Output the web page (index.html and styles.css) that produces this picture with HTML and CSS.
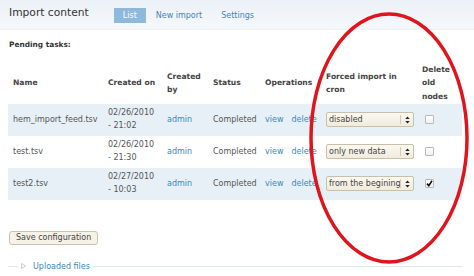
FILE: index.html
```html
<!DOCTYPE html>
<html lang="en">
<head>
    <meta charset="UTF-8">
    <title>Import content</title>
    <link rel="stylesheet" href="styles.css">
</head>
<body>
    <div class="header">
        <h1>Import content</h1>
        <ul class="tabs">
            <li class="active"><a href="#">List</a></li>
            <li><a href="#">New import</a></li>
            <li><a href="#">Settings</a></li>
        </ul>
    </div>

    <div class="content">
        <h3>Pending tasks:</h3>
        <table class="tasks">
            <colgroup>
                <col style="width: 95px">
                <col style="width: 59px">
                <col style="width: 46px">
                <col style="width: 52px">
                <col style="width: 61px">
                <col style="width: 96px">
                <col style="width: 45px">
            </colgroup>
            <thead>
                <tr>
                    <th>Name</th>
                    <th>Created on</th>
                    <th>Created by</th>
                    <th>Status</th>
                    <th>Operations</th>
                    <th>Forced import in cron</th>
                    <th>Delete old nodes</th>
                </tr>
            </thead>
            <tbody>
                <tr class="odd">
                    <td>hem_import_feed.tsv</td>
                    <td>02/26/2010<br>- 21:02</td>
                    <td><a href="#">admin</a></td>
                    <td>Completed</td>
                    <td><a href="#">view</a><a class="op" href="#">delete</a></td>
                    <td>
                        <div class="select"><span class="value">disabled</span><span class="arrows"><svg width="5" height="8" viewBox="0 0 5 8"><path d="M2.5 0.5 L4.7 3 L0.3 3 Z M2.5 7.5 L4.7 5 L0.3 5 Z" fill="#222"/></svg></span></div>
                    </td>
                    <td><span class="checkbox"></span></td>
                </tr>
                <tr class="even">
                    <td>test.tsv</td>
                    <td>02/26/2010<br>- 21:30</td>
                    <td><a href="#">admin</a></td>
                    <td>Completed</td>
                    <td><a href="#">view</a><a class="op" href="#">delete</a></td>
                    <td>
                        <div class="select"><span class="value">only new data</span><span class="arrows"><svg width="5" height="8" viewBox="0 0 5 8"><path d="M2.5 0.5 L4.7 3 L0.3 3 Z M2.5 7.5 L4.7 5 L0.3 5 Z" fill="#222"/></svg></span></div>
                    </td>
                    <td><span class="checkbox"></span></td>
                </tr>
                <tr class="odd">
                    <td>test2.tsv</td>
                    <td>02/27/2010<br>- 10:03</td>
                    <td><a href="#">admin</a></td>
                    <td>Completed</td>
                    <td><a href="#">view</a><a class="op" href="#">delete</a></td>
                    <td>
                        <div class="select"><span class="value">from the begining</span><span class="arrows"><svg width="5" height="8" viewBox="0 0 5 8"><path d="M2.5 0.5 L4.7 3 L0.3 3 Z M2.5 7.5 L4.7 5 L0.3 5 Z" fill="#222"/></svg></span></div>
                    </td>
                    <td><span class="checkbox checked"><svg width="7" height="7" viewBox="0 0 7 7"><path d="M1 3.6 L2.8 5.6 L6 0.8" fill="none" stroke="#111" stroke-width="1.6"/></svg></span></td>
                </tr>
            </tbody>
        </table>

        <button class="btn-save">Save configuration</button>

        <fieldset class="collapsed">
            <legend><svg class="arrow" width="5" height="6" viewBox="0 0 5 6"><path d="M0.5 0.5 L4.5 3 L0.5 5.5 Z" fill="none" stroke="#c4c9ce" stroke-width="0.9"/></svg><a href="#">Uploaded files</a></legend>
        </fieldset>
    </div>

    <svg class="annotation" width="474" height="276" viewBox="0 0 474 276">
        <ellipse cx="389" cy="138" rx="78" ry="124" fill="none" stroke="#e0141c" stroke-width="3.5"/>
    </svg>
</body>
</html>
```

FILE: styles.css
```css
body {
    margin: 0;
    padding: 0;
    font-family: "DejaVu Sans", sans-serif;
    font-size: 8px;
    color: #555;
    background: #fff;
    position: relative;
    overflow: hidden;
}
a {
    color: #3a87b8;
    text-decoration: none;
}
.header {
    height: 30px;
    padding: 5px 9px 0;
    box-sizing: border-box;
    display: flex;
    align-items: flex-start;
    background: linear-gradient(#ecf1f7, #f5f8fb);
    border-bottom: 1px solid #edf1f5;
}
h1 {
    margin: 0;
    font-size: 10.7px;
    line-height: 16px;
    font-weight: normal;
    color: #333;
}
.tabs {
    list-style: none;
    margin: 3px 0 0 25px;
    padding: 0;
    display: flex;
    gap: 1px;
}
.tabs li a {
    display: block;
    padding: 0 9px;
    line-height: 15px;
    color: #4584b3;
}
.tabs li.active a {
    background: #8fb9da;
    color: #fff;
}
.content {
    padding: 0 8px;
}
h3 {
    margin: 9px 0 11px 1px;
    font-size: 7.4px;
    line-height: 12px;
    color: #333;
}
.tasks {
    width: 454px;
    table-layout: fixed;
    border-collapse: collapse;
}
.tasks th {
    padding: 1px 5px;
    font-size: 7.6px;
    line-height: 13.3px;
    text-align: left;
    font-weight: bold;
    color: #444;
}
.tasks td {
    padding: 3.5px 5px;
    line-height: 12.5px;
    white-space: nowrap;
    vertical-align: middle;
}
.tasks tr.odd {
    background: #e8f0f7;
}
.tasks .op {
    margin-left: 8px;
}
.select {
    width: 88px;
    height: 15px;
    box-sizing: border-box;
    display: flex;
    align-items: center;
    border: 1px solid #c9c0a9;
    border-radius: 2px;
    background: linear-gradient(#fbf9f2, #f1ebdb);
    color: #444;
}
.select .value {
    flex: 1;
    min-width: 0;
    padding-left: 2px;
    line-height: 13px;
    white-space: nowrap;
}
.select .arrows {
    flex: none;
    width: 12px;
    height: 9px;
    border-left: 1px solid #d3cbb6;
    display: flex;
    align-items: center;
    justify-content: center;
}
.select .arrows svg {
    display: block;
}
.checkbox {
    display: block;
    width: 9px;
    height: 9px;
    margin-left: 3px;
    box-sizing: border-box;
    border: 1px solid #b9b9b9;
    border-radius: 1px;
    background: linear-gradient(#fff, #f0f0f0);
}
.checkbox svg {
    display: block;
    margin: 0;
}
.btn-save {
    display: block;
    margin: 31px 0 0 1px;
    padding: 0 6px;
    height: 14px;
    font-family: "DejaVu Sans", sans-serif;
    font-size: 8px;
    line-height: 12px;
    color: #444;
    background: #f7f2e8;
    border: 1px solid #cdc3ad;
    border-radius: 3px;
}
fieldset.collapsed {
    margin: 16px 0 0;
    padding: 0 0 0 10px;
    width: 454px;
    box-sizing: border-box;
    border: 0;
    border-top: 1px solid #dfe5ea;
    min-height: 20px;
}
fieldset.collapsed legend {
    padding: 0 3px;
    line-height: 12px;
}
fieldset.collapsed legend .arrow {
    margin-right: 7px;
    vertical-align: 0;
}
.annotation {
    position: absolute;
    left: 0;
    top: 0;
    pointer-events: none;
}
```
